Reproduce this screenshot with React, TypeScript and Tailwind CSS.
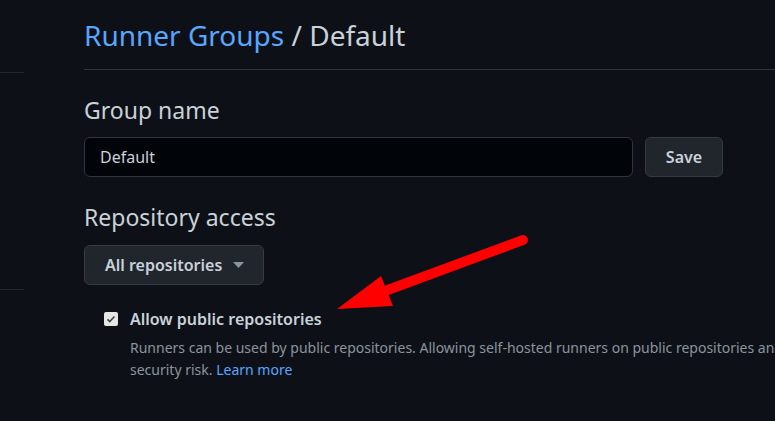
import React from "react";

export default function App() {
  return (
    <div
      className="relative h-[421px] w-[775px] overflow-hidden bg-[#0d1117] text-[#c9d1d9]"
      style={{ fontFamily: '"Noto Sans", "Open Sans", sans-serif' }}
    >
      <div className="flex">
        {/* Sidebar (cut off) */}
        <aside className="w-[24px] shrink-0">
          <div className="h-[73px] border-b border-[#21262d]" />
          <div className="h-[217px] border-b border-[#21262d]" />
        </aside>

        {/* Main */}
        <main className="ml-[60px] w-[760px] shrink-0">
          <div className="h-[70px] border-b border-[#30363d] pt-[17px]">
            <h1 className="text-[28px] leading-[36px] whitespace-nowrap">
              <a className="text-[#58a6ff]">Runner Groups</a>
              <span className="text-[#c9d1d9]"> / Default</span>
            </h1>
          </div>

          <h2 className="mt-[23px] text-[23px] leading-[34px]">Group name</h2>
          <div className="mt-[10px] flex gap-[12px]">
            <input
              readOnly
              value="Default"
              className="h-[40px] w-[549px] rounded-[6px] border border-[#30363d] bg-[#010409] px-[15px] text-[16px] text-[#c9d1d9] outline-none"
            />
            <button className="h-[40px] w-[78px] rounded-[6px] border border-[#363b42] bg-[#21262d] text-[16px] font-semibold text-[#c9d1d9]">
              Save
            </button>
          </div>

          <h2 className="mt-[23px] text-[23px] leading-[34px]">Repository access</h2>
          <button className="mt-[11px] flex h-[40px] w-[180px] items-center gap-[11px] rounded-[6px] border border-[#363b42] bg-[#21262d] pl-[20px] text-[16px] font-semibold text-[#c9d1d9]">
            All repositories
            <svg width="11" height="6" viewBox="0 0 11 6" fill="#8b949e">
              <path d="M0 0h11L5.5 6z" />
            </svg>
          </button>

          <div className="mt-[20px] flex pl-[20px]">
            <div className="pt-[7px]">
              <span className="flex h-[14px] w-[14px] items-center justify-center rounded-[2px] bg-[#e6e6e6]">
                <svg width="10" height="10" viewBox="0 0 16 16" fill="none" stroke="#444" strokeWidth="2.6">
                  <path d="M2.5 8.5l3.5 3.5 7.5-8" />
                </svg>
              </span>
            </div>
            <div className="ml-[12px]">
              <div className="text-[16px] leading-[28px] font-semibold text-[#c9d1d9]">
                Allow public repositories
              </div>
              <p className="mt-[4px] whitespace-nowrap text-[14px] leading-[22px] text-[#8b949e]">
                Runners can be used by public repositories. Allowing self-hosted runners on public repositories and forked repositories is a
                <br />
                security risk. <a className="text-[#58a6ff]">Learn more</a>
              </p>
            </div>
          </div>
        </main>
      </div>

      {/* Annotation arrow */}
      <svg className="pointer-events-none absolute left-0 top-0" width="775" height="421">
        <line x1="523" y1="240" x2="385" y2="291" stroke="#ff0000" strokeWidth="10" strokeLinecap="round" />
        <polygon points="337,309 381,276 393,306" fill="#ff0000" />
      </svg>
    </div>
  );
}
